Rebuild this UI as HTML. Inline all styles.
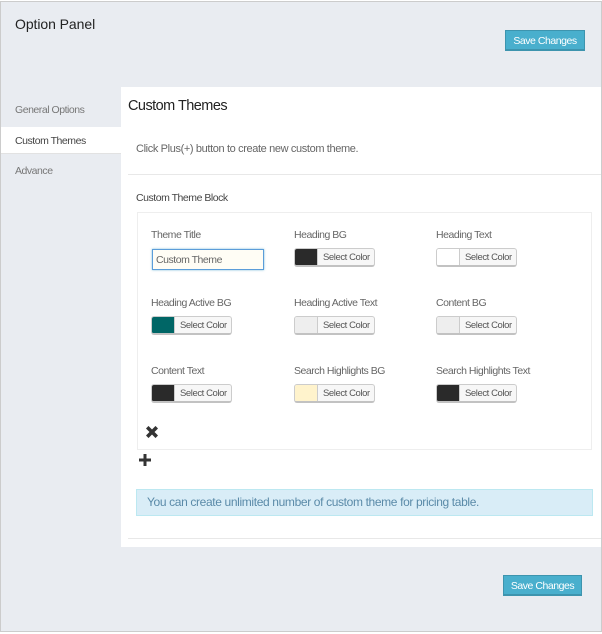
<!DOCTYPE html>
<html><head><meta charset="utf-8"><style>
html,body{margin:0;padding:0;background:#fff;}
body{width:602px;height:634px;position:relative;overflow:hidden;font-family:"Liberation Sans",sans-serif;}
div{position:absolute;box-sizing:border-box;}
.t{white-space:nowrap;line-height:16px;height:16px;}
.l{font-size:10.5px;color:#666;letter-spacing:-.47px;}
.btn{width:81px;height:19px;background:#f7f7f7;border:1px solid #ccc;border-bottom:2px solid #c2c2c2;border-radius:3px;overflow:hidden;}
.btn .s{left:0;top:0;width:23px;height:17px;border-right:1px solid #ccc;}
.btn .c{left:28px;top:0;font-size:9.5px;line-height:18px;color:#555;white-space:nowrap;letter-spacing:-.42px;font-weight:normal;}
.sv{background:#49afcd;border:1px solid #3d94ae;border-bottom:2px solid #3d94ae;color:#fff;font-size:10.5px;text-align:center;line-height:20px;letter-spacing:-.47px;}
</style></head><body>
<div style="left:0;top:1px;width:602px;height:631px;background:#e9ecf1;border:1px solid #ccc;"></div>
<div class="t" style="left:15px;top:16px;font-size:14px;color:#222;letter-spacing:-.07px;">Option Panel</div>
<div class="sv" style="left:505px;top:30px;width:80px;height:21px;">Save Changes</div>

<div class="t l" style="left:15px;top:102px;color:#777;">General Options</div>
<div style="left:1px;top:127px;width:120px;height:27px;background:#fff;border-bottom:1px solid #e2e2e2;"></div>
<div class="t l" style="left:15px;top:133px;color:#444;">Custom Themes</div>
<div class="t l" style="left:15px;top:163px;color:#777;">Advance</div>

<div style="left:121px;top:87px;width:480px;height:460px;background:#fff;"></div>
<div class="t" style="left:128px;top:98px;font-size:14.5px;color:#222;letter-spacing:-.54px;">Custom Themes</div>
<div class="t l" style="left:136px;top:141px;font-size:11px;letter-spacing:-.37px;">Click Plus(+) button to create new custom theme.</div>
<div style="left:128px;top:174px;width:473px;height:1px;background:#e8e8e8;"></div>
<div class="t l" style="left:136px;top:190px;color:#444;">Custom Theme Block</div>

<div style="left:137px;top:212px;width:455px;height:238px;border:1px solid #eee;"></div>

<div class="t l" style="left:151px;top:227px;">Theme Title</div>
<div class="t l" style="left:294px;top:227px;">Heading BG</div>
<div class="t l" style="left:436px;top:227px;">Heading Text</div>
<div style="left:152px;top:249px;width:112px;height:21px;background:#fffdf5;border:1px solid #5b9dd9;box-shadow:0 0 2px rgba(30,140,190,.6);"></div>
<div class="t l" style="left:156px;top:252px;">Custom Theme</div>
<div class="btn" style="left:294px;top:248px;"><div class="s" style="background:#2a2a2a;"></div><div class="c">Select Color</div></div>
<div class="btn" style="left:436px;top:248px;"><div class="s" style="background:#fff;"></div><div class="c">Select Color</div></div>

<div class="t l" style="left:151px;top:295px;">Heading Active BG</div>
<div class="t l" style="left:294px;top:295px;">Heading Active Text</div>
<div class="t l" style="left:436px;top:295px;">Content BG</div>
<div class="btn" style="left:151px;top:316px;"><div class="s" style="background:#006666;"></div><div class="c">Select Color</div></div>
<div class="btn" style="left:294px;top:316px;"><div class="s" style="background:#eee;"></div><div class="c">Select Color</div></div>
<div class="btn" style="left:436px;top:316px;"><div class="s" style="background:#eee;"></div><div class="c">Select Color</div></div>

<div class="t l" style="left:151px;top:363px;">Content Text</div>
<div class="t l" style="left:294px;top:363px;">Search Highlights BG</div>
<div class="t l" style="left:436px;top:363px;">Search Highlights Text</div>
<div class="btn" style="left:151px;top:384px;"><div class="s" style="background:#2a2a2a;"></div><div class="c">Select Color</div></div>
<div class="btn" style="left:294px;top:384px;"><div class="s" style="background:#fff3cc;"></div><div class="c">Select Color</div></div>
<div class="btn" style="left:436px;top:384px;"><div class="s" style="background:#2a2a2a;"></div><div class="c">Select Color</div></div>

<svg style="position:absolute;left:146px;top:426px;" width="12" height="12" viewBox="0 0 12 12"><path d="M2.5 2.5L9.5 9.5M9.5 2.5L2.5 9.5" stroke="#333" stroke-width="3.6" stroke-linecap="square"/></svg>
<svg style="position:absolute;left:139px;top:454px;" width="12" height="12" viewBox="0 0 12 12"><path d="M6 0V12M0 6H12" stroke="#333" stroke-width="3"/></svg>

<div style="left:136px;top:489px;width:457px;height:27px;background:#d9edf7;border:1px solid #bce8f1;"></div>
<div class="t" style="left:147px;top:494px;font-size:12px;color:#5a8aa8;letter-spacing:-.36px;">You can create unlimited number of custom theme for pricing table.</div>
<div style="left:128px;top:538px;width:473px;height:1px;background:#e8e8e8;"></div>

<div class="sv" style="left:503px;top:575px;width:79px;height:21px;">Save Changes</div>
</body></html>
